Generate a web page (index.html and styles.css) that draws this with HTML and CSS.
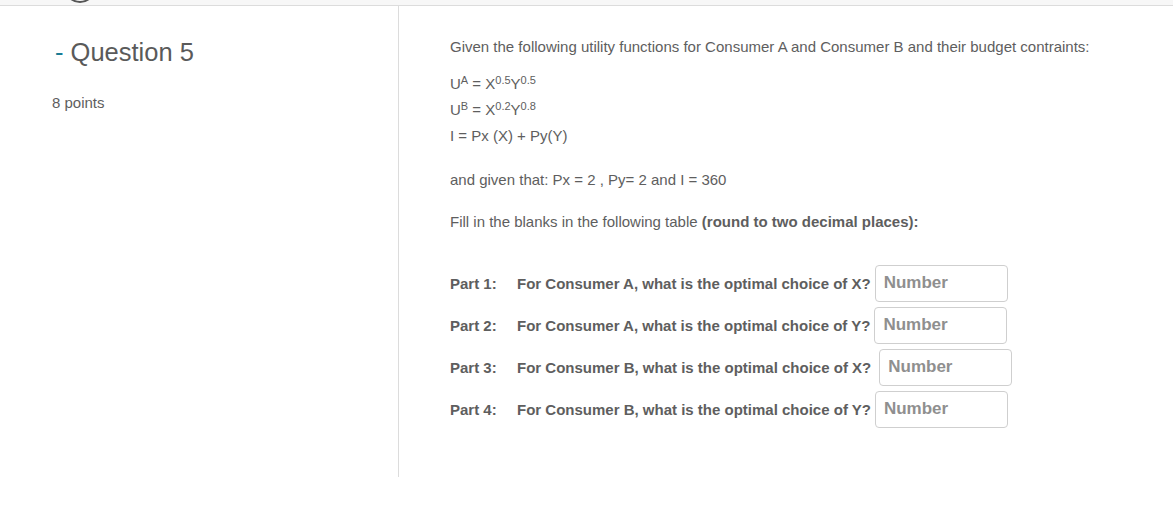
FILE: index.html
```html
<!DOCTYPE html>
<html>
<head>
<meta charset="utf-8">
<link rel="stylesheet" href="styles.css">
</head>
<body>
<div class="topbar"><div class="ring"></div></div>
<div class="question">
  <div class="side">
    <h2 class="qtitle"><span class="dash">-</span> Question 5</h2>
    <div class="points">8 points</div>
  </div>
  <div class="main">
    <p class="intro">Given the following utility functions for Consumer A and Consumer B and their budget contraints:</p>
    <div class="formulas">
      <div>U<sup>A</sup> = X<sup>0.5</sup>Y<sup>0.5</sup></div>
      <div>U<sup>B</sup> = X<sup>0.2</sup>Y<sup>0.8</sup></div>
      <div>I = Px (X) + Py(Y)</div>
    </div>
    <p class="given">and given that: Px = 2 , Py= 2 and I = 360</p>
    <p class="fill">Fill in the blanks in the following table <b>(round to two decimal places):</b></p>
    <div class="parts">
      <div class="part"><span class="plabel">Part 1:</span><span class="ptext">For Consumer A, what is the optimal choice of X?</span><input class="num" type="text" placeholder="Number"></div>
      <div class="part"><span class="plabel">Part 2:</span><span class="ptext">For Consumer A, what is the optimal choice of Y?</span><input class="num" type="text" placeholder="Number"></div>
      <div class="part"><span class="plabel">Part 3:</span><span class="ptext wide">For Consumer B, what is the optimal choice of X?</span><input class="num" type="text" placeholder="Number"></div>
      <div class="part"><span class="plabel">Part 4:</span><span class="ptext">For Consumer B, what is the optimal choice of Y?</span><input class="num" type="text" placeholder="Number"></div>
    </div>
  </div>
</div>
</body>
</html>
```
FILE: styles.css
```css
html, body {
  margin: 0;
  padding: 0;
  background: #fff;
}
body {
  font-family: "Liberation Sans", Arial, sans-serif;
  color: #5e5e5e;
  width: 1174px;
}
.topbar {
  height: 5px;
  background: #f7f7f7;
  border-bottom: 1px solid #dcdcdc;
  overflow: hidden;
  margin-right: 1px;
}
.ring {
  width: 28px;
  height: 28px;
  border: 2px solid #555;
  border-radius: 50%;
  margin-left: 64px;
  margin-top: -29px;
}
.question {
  display: flex;
  height: 471px;
}
.side {
  width: 346px;
  padding: 31px 0 0 52px;
  border-right: 1px solid #dcdcdc;
}
.qtitle {
  margin: 0;
  font-size: 25.5px;
  line-height: 30px;
  font-weight: normal;
  color: #5a5a5a;
  padding-left: 3px;
}
.dash {
  color: #1a7c95;
}
.points {
  margin-top: 26px;
  font-size: 15px;
  line-height: 20px;
}
.main {
  padding: 31px 0 0 51px;
  font-size: 15px;
}
.main p {
  margin: 0;
  line-height: 20px;
}
.formulas {
  margin-top: 14px;
  line-height: 26px;
}
.formulas sup {
  font-size: 11px;
  line-height: 0;
  vertical-align: 5px;
}
.given {
  margin-top: 21px !important;
}
.fill {
  margin-top: 22px !important;
}
.fill b {
  font-weight: bold;
}
.parts {
  margin-top: 33px;
  display: flex;
  flex-direction: column;
  gap: 6px;
}
.part {
  display: flex;
  align-items: center;
  height: 36px;
  font-weight: bold;
}
.plabel {
  width: 67px;
}
.ptext {
  margin-right: 4px;
}
.ptext.wide {
  margin-right: 8px;
}
.num {
  box-sizing: border-box;
  width: 133px;
  height: 37px;
  border: 1px solid #cfcfcf;
  border-radius: 4px;
  padding: 0 8px;
  font-family: "Liberation Sans", Arial, sans-serif;
  font-size: 17px;
  font-weight: bold;
  color: #555;
  background: #fff;
}
.num::placeholder {
  color: #8f8f8f;
  opacity: 1;
}
```
